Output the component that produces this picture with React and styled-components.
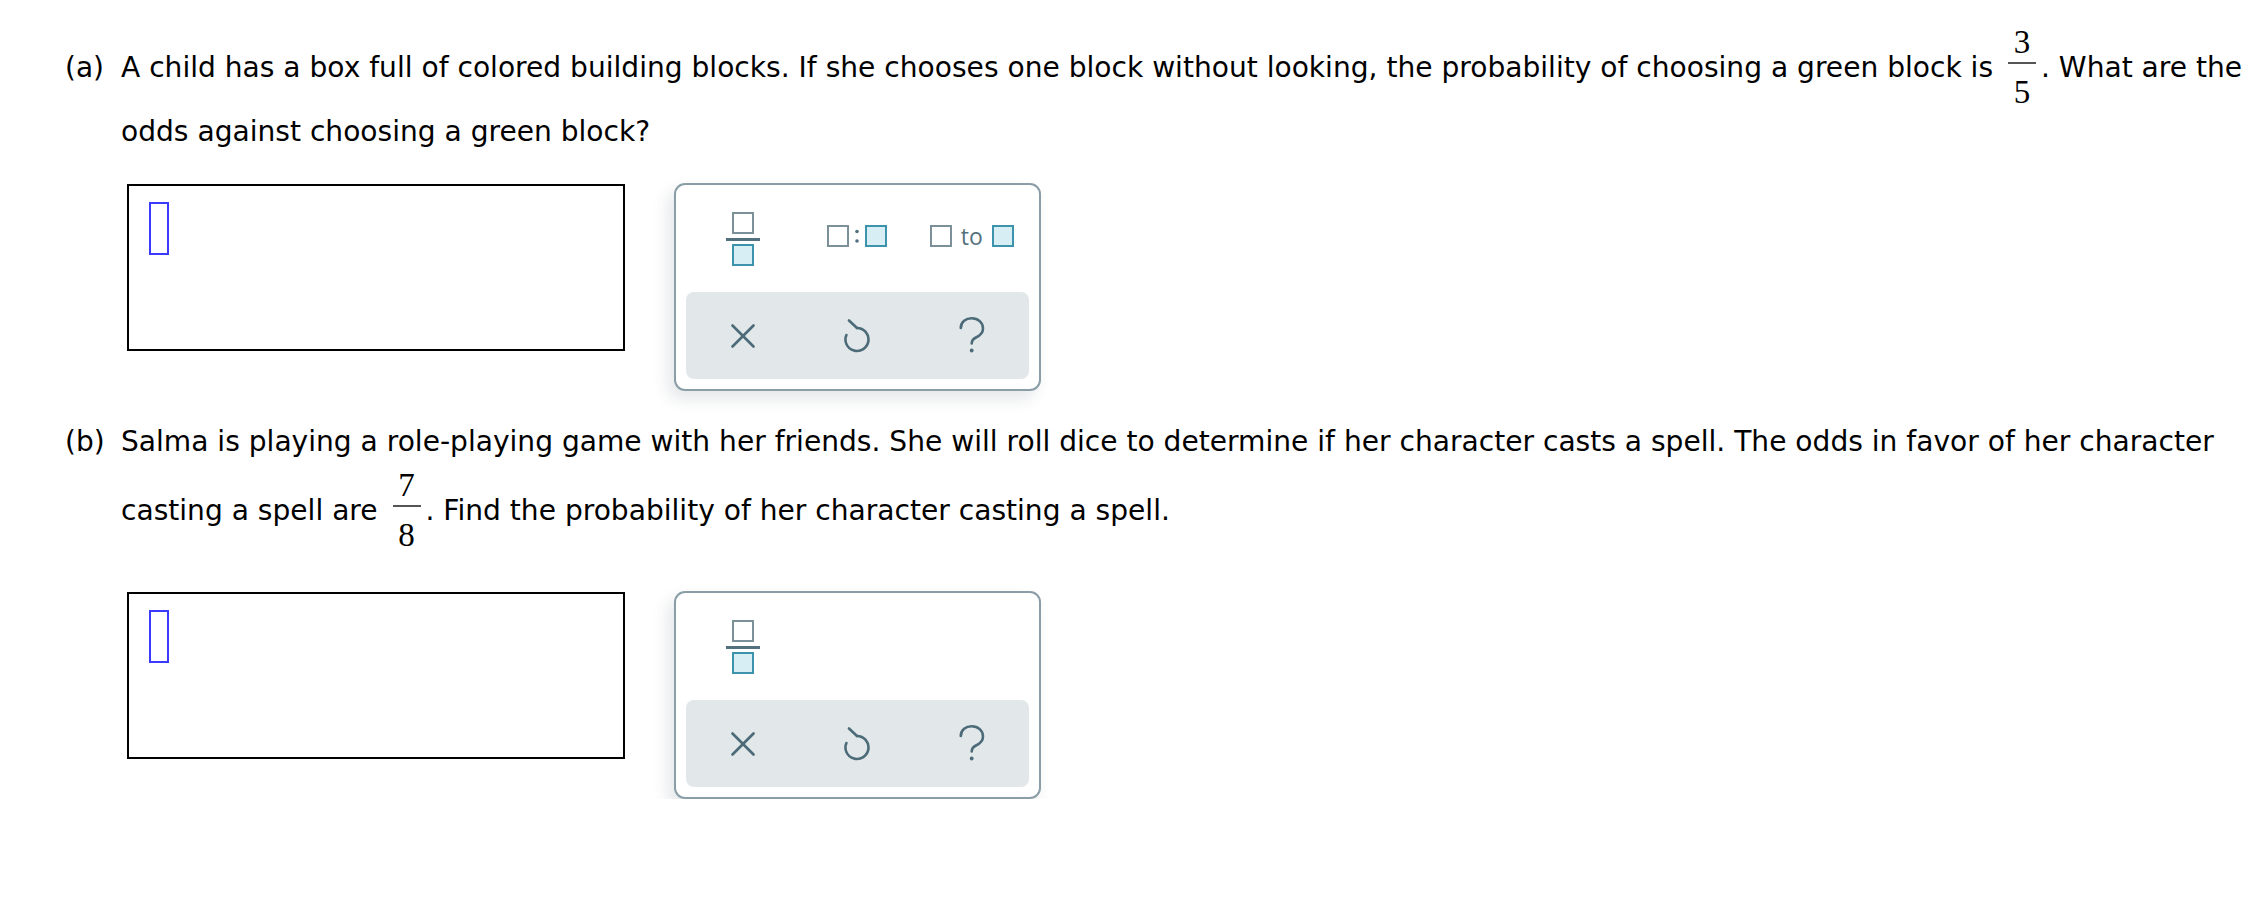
import React from "react";
import styled, { createGlobalStyle } from "styled-components";

const GlobalStyle = createGlobalStyle`
  html, body {
    margin: 0;
    padding: 0;
    background: #ffffff;
  }
  body {
    font-family: "DejaVu Sans", Verdana, sans-serif;
    color: #000000;
  }
`;

const ICON = "#4b6b78";

function FractionIcon() {
  return (
    <svg width="34" height="54" viewBox="0 0 34 54">
      <rect x="7" y="1" width="20" height="20" fill="#fff" stroke="#7b9099" strokeWidth="2" />
      <rect x="0" y="26" width="34" height="3" fill="#52707d" />
      <rect x="7" y="33" width="20" height="20" fill="#d6eef4" stroke="#3d93ab" strokeWidth="2" />
    </svg>
  );
}

function RatioIcon() {
  return (
    <svg width="60" height="22" viewBox="0 0 60 22">
      <rect x="1" y="1" width="20" height="20" fill="#fff" stroke="#7b9099" strokeWidth="2" />
      <circle cx="30" cy="6.5" r="1.8" fill="#52707d" />
      <circle cx="30" cy="16" r="1.8" fill="#52707d" />
      <rect x="39" y="1" width="20" height="20" fill="#d6eef4" stroke="#3d93ab" strokeWidth="2" />
    </svg>
  );
}

function SmallBox({ filled }) {
  return (
    <svg width="22" height="22" viewBox="0 0 22 22">
      <rect
        x="1"
        y="1"
        width="20"
        height="20"
        fill={filled ? "#d6eef4" : "#fff"}
        stroke={filled ? "#3d93ab" : "#7b9099"}
        strokeWidth="2"
      />
    </svg>
  );
}

function ClearIcon() {
  return (
    <svg width="24" height="24" viewBox="0 0 24 24" fill="none" stroke={ICON} strokeWidth="2.6" strokeLinecap="round">
      <line x1="1.5" y1="1.5" x2="22.5" y2="22.5" />
      <line x1="22.5" y1="1.5" x2="1.5" y2="22.5" />
    </svg>
  );
}

function UndoIcon() {
  return (
    <svg width="27" height="34" viewBox="0 0 27 34" fill="none" stroke={ICON} strokeWidth="2.6" strokeLinecap="round" strokeLinejoin="round">
      <path d="M13 9 A11.5 11.5 0 1 1 2.4 16" />
      <path d="M5 1.5 L13 9" />
    </svg>
  );
}

function HelpIcon() {
  return (
    <svg width="26" height="37" viewBox="0 0 26 37" fill="none" stroke={ICON} strokeWidth="2.6" strokeLinecap="round">
      <path d="M1.8 11 C1.8 4.5 7 1.3 12.7 1.3 C19 1.3 24 5.5 24 11.5 C24 16.5 20.5 18.8 17 20.5 C13.8 22 12.7 23.5 12.7 26.5" />
      <circle cx="12.7" cy="33.5" r="1.9" fill={ICON} stroke="none" />
    </svg>
  );
}

function Fraction({ top, bottom }) {
  return (
    <Frac>
      <Num>{top}</Num>
      <Bar />
      <Den>{bottom}</Den>
    </Frac>
  );
}

function Keypad({ odds }) {
  return (
    <Pad>
      <KeyRow>
        <Key title="Fraction">
          <FractionIcon />
        </Key>
        {odds && (
          <Key title="Ratio" $raise>
            <RatioIcon />
          </Key>
        )}
        {odds && (
          <Key title="Odds" $raise>
            <ToGroup>
              <SmallBox />
              <ToText>to</ToText>
              <SmallBox filled />
            </ToGroup>
          </Key>
        )}
      </KeyRow>
      <ActionBar>
        <Key title="Clear">
          <ClearIcon />
        </Key>
        <Key title="Undo">
          <UndoIcon />
        </Key>
        <Key title="Help">
          <HelpIcon />
        </Key>
      </ActionBar>
    </Pad>
  );
}

function Question({ label, children, odds, spacing }) {
  return (
    <Part>
      <Label>{label}</Label>
      <Body>
        <Text>{children}</Text>
        <AnswerRow $spacing={spacing}>
          <AnswerBox>
            <Cursor />
          </AnswerBox>
          <Keypad odds={odds} />
        </AnswerRow>
      </Body>
    </Part>
  );
}

export default function App() {
  return (
    <>
      <GlobalStyle />
      <Page>
        <Question label="(a)" odds spacing={25}>
          A child has a box full of colored building blocks. If she chooses one block without looking,
          the probability of choosing a green block is <Fraction top="3" bottom="5" />. What are the odds
          against choosing a green block?
        </Question>
        <Question label="(b)" spacing={44}>
          Salma is playing a role-playing game with her friends. She will roll dice to determine if her
          character casts a spell. The odds in favor of her character casting a spell are{" "}
          <Fraction top="7" bottom="8" />. Find the probability of her character casting a spell.
        </Question>
      </Page>
    </>
  );
}

const Page = styled.div`
  display: flex;
  flex-direction: column;
  gap: 24px;
  padding: 26px 8px 0 65px;
`;

const Part = styled.div`
  display: flex;
  align-items: baseline;
`;

const Label = styled.div`
  flex: 0 0 56px;
  font-size: 28px;
  line-height: 54px;
  white-space: nowrap;
`;

const Body = styled.div`
  flex: 1;
  min-width: 0;
`;

const Text = styled.p`
  margin: 0;
  font-size: 28.1px;
  line-height: 54px;
`;

const Frac = styled.span`
  display: inline-flex;
  flex-direction: column;
  align-items: stretch;
  vertical-align: 24px;
  min-width: 28px;
  margin: 0 5px 0 6px;
  padding: 3px 0 0;
  font-family: "Liberation Serif", "DejaVu Serif", "Times New Roman", serif;
  font-size: 33px;
`;

const Num = styled.span`
  line-height: 26px;
  text-align: center;
`;

const Den = styled.span`
  line-height: 26px;
  text-align: center;
  margin-top: 15px;
`;

const Bar = styled.span`
  display: block;
  height: 2px;
  margin-top: 7px;
  background: #555555;
`;

const AnswerRow = styled.div`
  display: flex;
  align-items: flex-start;
  gap: 49px;
  margin: ${(p) => p.$spacing}px 0 0 6px;
`;

const AnswerBox = styled.div`
  box-sizing: border-box;
  width: 498px;
  height: 167px;
  border: 2px solid #000000;
  padding: 16px 20px;
  background: #ffffff;
`;

const Cursor = styled.div`
  box-sizing: border-box;
  width: 20px;
  height: 53px;
  border: 2px solid #3b3bff;
`;

const Pad = styled.div`
  box-sizing: border-box;
  width: 367px;
  height: 208px;
  margin-top: -1px;
  display: flex;
  flex-direction: column;
  padding: 0 10px 10px;
  border: 2px solid #8b9ea7;
  border-radius: 11px;
  background: #ffffff;
  box-shadow: -6px 8px 16px rgba(40, 60, 70, 0.12);
`;

const KeyRow = styled.div`
  display: grid;
  grid-template-columns: repeat(3, 1fr);
  height: 107px;
`;

const ActionBar = styled.div`
  display: grid;
  grid-template-columns: repeat(3, 1fr);
  flex: 1;
  background: #e2e7ea;
  border-radius: 8px;
`;

const Key = styled.div`
  display: flex;
  align-items: center;
  justify-content: center;
  padding-bottom: ${(p) => (p.$raise ? "5px" : "0")};
`;

const ToGroup = styled.div`
  display: flex;
  align-items: center;
  gap: 9px;
`;

const ToText = styled.span`
  font-family: "Open Sans", sans-serif;
  font-size: 23px;
  line-height: 22px;
  color: #55717e;
`;
